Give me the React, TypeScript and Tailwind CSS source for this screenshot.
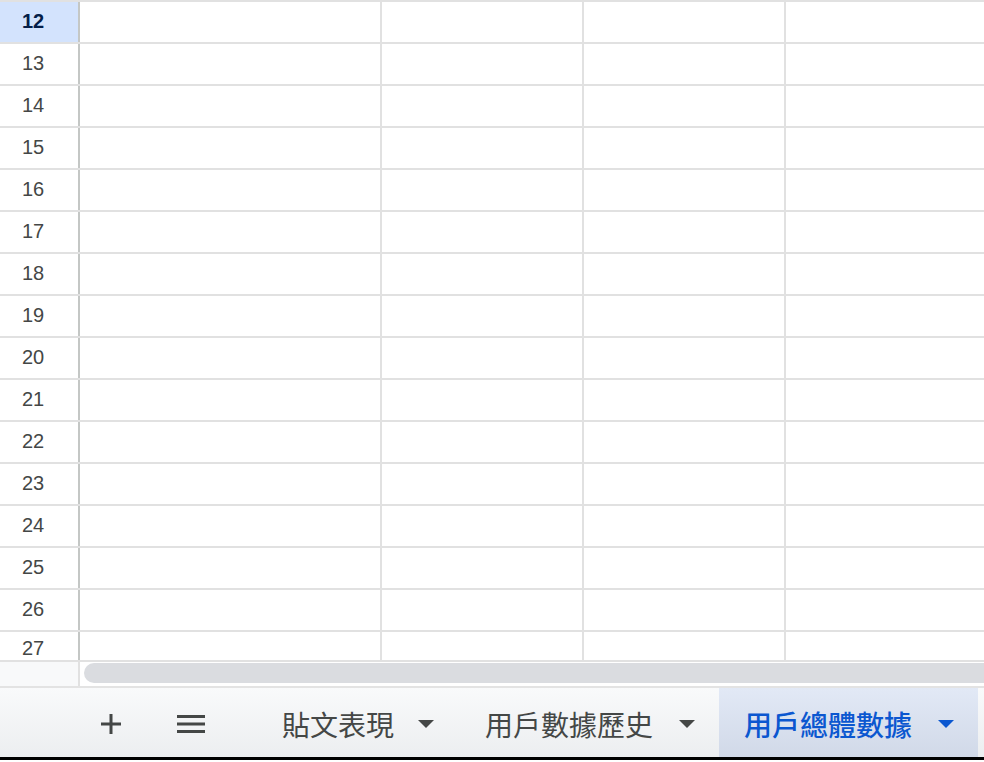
import React from 'react';

const ROWS = [12, 13, 14, 15, 16, 17, 18, 19, 20, 21, 22, 23, 24, 25, 26];

const Caret: React.FC<{ color: string }> = ({ color }) => (
  <svg width="16" height="8" viewBox="0 0 16 8" className="shrink-0">
    <polygon points="0,0 16,0 8,8" fill={color} />
  </svg>
);

const Row: React.FC<{ n: number; selected?: boolean; short?: boolean }> = ({ n, selected, short }) => (
  <div className={`flex overflow-hidden ${short ? 'h-[28px]' : 'h-[42px] border-b-2 border-[#e1e1e1]'}`}>
    <div
      className={`w-[80px] shrink-0 border-r-2 border-[#c4c7c5] flex justify-center pr-[12px] text-[20px] ${
        selected ? 'bg-[#d3e3fd] text-[#041e49] font-bold' : 'bg-white text-[#444746]'
      } ${short ? 'items-start pt-[4px]' : 'items-center pb-[2px]'}`}
    >
      <span className="leading-[24px]">{n}</span>
    </div>
    <div className="w-[302px] shrink-0 border-r-2 border-[#e1e1e1]" />
    <div className="w-[202px] shrink-0 border-r-2 border-[#e1e1e1]" />
    <div className="w-[202px] shrink-0 border-r-2 border-[#e1e1e1]" />
    <div className="flex-1" />
  </div>
);

export default function App() {
  return (
    <div
      className="w-[984px] h-[762px] overflow-hidden bg-white flex flex-col"
      style={{ fontFamily: '"Liberation Sans", Arial, sans-serif' }}
    >
      {/* Grid */}
      <div className="border-t-2 border-[#e1e1e1] flex flex-col">
        {ROWS.map((n) => (
          <Row key={n} n={n} selected={n === 12} />
        ))}
        <Row n={27} short />
      </div>

      {/* Horizontal scrollbar */}
      <div className="flex h-[26px] border-t-2 border-[#e1e1e1]">
        <div className="w-[80px] shrink-0 bg-[#f8f9fa] border-r-2 border-[#e1e1e1]" />
        <div className="flex-1 pl-[4px] pt-[1px]">
          <div className="h-[20px] w-[1000px] rounded-full bg-[#dadce0]" />
        </div>
      </div>

      {/* Sheet tabs */}
      <div
        className="flex h-[71px] border-t-2 border-[#e3e3e3] bg-gradient-to-b from-[#f9fafb] to-[#eceef0] text-[28px] text-[#444746]"
        style={{ fontFamily: '"Noto Sans CJK TC", "Noto Sans CJK SC", sans-serif' }}
      >
        <div className="ml-[101px] flex items-center pt-[2px]">
          <svg width="20" height="20" viewBox="0 0 20 20">
            <rect x="8.5" y="0" width="3" height="20" fill="#444746" />
            <rect x="0" y="8.5" width="20" height="3" fill="#444746" />
          </svg>
        </div>
        <div className="ml-[56px] flex items-center pt-[2px]">
          <svg width="28" height="18" viewBox="0 0 28 18">
            <rect x="0" y="0" width="28" height="3" fill="#444746" />
            <rect x="0" y="7.5" width="28" height="3" fill="#444746" />
            <rect x="0" y="15" width="28" height="3" fill="#444746" />
          </svg>
        </div>
        <div className="ml-[53px] flex items-center pl-[24px] pr-[24px] pt-[3px] gap-[24px]">
          <span className="leading-none">貼文表現</span>
          <Caret color="#444746" />
        </div>
        <div className="ml-[3px] flex items-center pl-[24px] pr-[24px] pt-[3px] gap-[26px]">
          <span className="leading-none">用戶數據歷史</span>
          <Caret color="#444746" />
        </div>
        <div className="flex items-center pl-[25px] pr-[24px] pt-[3px] gap-[26px] bg-gradient-to-b from-[#e2e9f6] to-[#d1d9e8] text-[#0b57d0]">
          <span className="leading-none font-medium">用戶總體數據</span>
          <Caret color="#0b57d0" />
        </div>
      </div>
      <div className="h-[3px] bg-black" />
    </div>
  );
}
